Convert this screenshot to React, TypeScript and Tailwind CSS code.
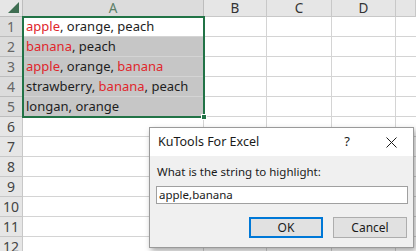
import React from "react";

type Seg = { t: string; red?: boolean };

const rows: Seg[][] = [
  [{ t: "apple", red: true }, { t: ", orange, peach" }],
  [{ t: "banana", red: true }, { t: ", peach" }],
  [{ t: "apple", red: true }, { t: ", orange, " }, { t: "banana", red: true }],
  [{ t: "strawberry, " }, { t: "banana", red: true }, { t: ", peach" }],
  [{ t: "longan, orange" }],
];

const cols = ["A", "B", "C", "D", ""];

function Sheet() {
  return (
    <div className="grid grid-cols-[23px_181px_63px_65px_64px_1fr] auto-rows-[20px] grid-rows-[17px] text-[13px] leading-none">
      {/* header row */}
      <div className="relative bg-[#e6e6e6] border-r border-b border-[#bdbdbd]">
        <div className="absolute right-[3px] bottom-[3px] w-0 h-0 border-l-[11px] border-l-transparent border-b-[11px] border-b-[#3f6e52]" />
      </div>
      {cols.map((c, i) => (
        <div
          key={i}
          className={
            i === 0
              ? "bg-[#dcdcdc] border-r border-b border-[#bdbdbd] text-[#5d8068] flex items-center justify-center text-[13.5px] leading-[14px]"
              : "bg-[#e6e6e6] border-r border-b border-[#c8c8c8] text-[#333] flex items-center justify-center text-[13.5px] leading-[14px]"
          }
        >
          {c}
        </div>
      ))}

      {Array.from({ length: 12 }).map((_, r) => {
        const sel = r < 5;
        return (
          <React.Fragment key={r}>
            <div
              className={
                sel
                  ? "bg-[#dcdcdc] border-r border-b border-[#bdbdbd] text-[#666] flex items-center justify-center text-[14px] leading-[15px]"
                  : "bg-[#e6e6e6] border-r border-b border-[#c8c8c8] text-[#444] flex items-center justify-center text-[14px] leading-[15px]"
              }
            >
              {r + 1}
            </div>
            <div
              className={
                (r === 0 ? "bg-white " : sel ? "bg-[#c6c6c6] " : "bg-white ") +
                "border-r border-b border-[#d4d4d4] flex items-center pl-[3px] text-[#1e1e1e] whitespace-pre overflow-hidden"
              }
            >
              {sel && (
                <span>
                  {rows[r].map((s, k) => (
                    <span key={k} className={s.red ? "text-[#e0262c]" : ""}>
                      {s.t}
                    </span>
                  ))}
                </span>
              )}
            </div>
            <div className="bg-white border-r border-b border-[#d4d4d4]" />
            <div className="bg-white border-r border-b border-[#d4d4d4]" />
            <div className="bg-white border-r border-b border-[#d4d4d4]" />
            <div className="bg-white border-b border-[#d4d4d4]" />
          </React.Fragment>
        );
      })}
    </div>
  );
}

function Dialog() {
  return (
    <div className="absolute left-[149px] top-[127px] w-[265px] h-[121px] border border-[#9a9a9a] bg-[#f0f0f0] shadow-[2px_3px_6px_rgba(0,0,0,0.35)] flex flex-col">
      <div className="h-[28px] bg-white flex items-center pl-[8px] text-[12.5px] text-[#1a1a1a]">
        <span className="flex-1">KuTools For Excel</span>
        <span className="w-[44px] text-center text-[13px]">?</span>
        <span className="w-[44px] flex items-center justify-center">
          <svg width="11" height="11" viewBox="0 0 11 11" className="stroke-[#1a1a1a]">
            <path d="M0.5 0.5L10.5 10.5M10.5 0.5L0.5 10.5" strokeWidth="1" fill="none" />
          </svg>
        </span>
      </div>
      <div className="flex flex-col px-[6px] pt-[9px] text-[11.5px] leading-[14px] text-[#1a1a1a]">
        <div className="pl-[1px]">What is the string to highlight:</div>
        <div className="mt-[7px] h-[18px] w-[252px] bg-white border border-[#a0a0a0] flex items-center pl-[2px]">
          apple,banana
        </div>
        <div className="mt-[13px] flex justify-end gap-[10px]">
          <div className="w-[74px] h-[21px] bg-[#e1e1e1] border-2 border-[#0078d7] flex items-center justify-center text-[12px]">
            OK
          </div>
          <div className="w-[74px] h-[21px] bg-[#e1e1e1] border border-[#adadad] flex items-center justify-center text-[12px]">
            Cancel
          </div>
        </div>
      </div>
    </div>
  );
}

export default function App() {
  return (
    <div
      className="relative w-[416px] h-[251px] overflow-hidden bg-white"
      style={{ fontFamily: '"Noto Sans", "Open Sans", sans-serif' }}
    >
      <Sheet />
      {/* selection outline */}
      <div className="absolute left-[22px] top-[16px] w-[183px] h-[102px] border-2 border-[#217346] pointer-events-none" />
      <div className="absolute left-[201px] top-[114px] w-[6px] h-[6px] bg-[#217346] border border-white" />
      <Dialog />
    </div>
  );
}
